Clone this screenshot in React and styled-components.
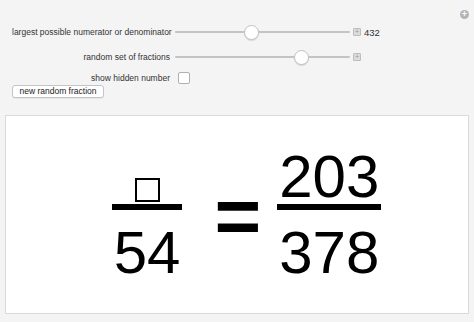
import React from "react";
import styled, { createGlobalStyle } from "styled-components";

const GlobalStyle = createGlobalStyle`
  html, body {
    margin: 0;
    padding: 0;
    background: #f4f4f4;
  }
  body {
    font-family: "Liberation Sans", Arial, sans-serif;
  }
`;

const Page = styled.div`
  width: 474px;
  height: 322px;
  box-sizing: border-box;
  position: relative;
  background: #f4f4f4;
  padding: 24px 5px 0 5px;
`;

const CornerButton = styled.div`
  position: absolute;
  top: 10px;
  right: 5px;
  width: 9px;
  height: 9px;
  border-radius: 50%;
  background: #b4b4b4;
  display: flex;
  align-items: center;
  justify-content: center;
  color: #fff;
  font-size: 9px;
  font-weight: bold;
  line-height: 9px;
`;

const Controls = styled.div`
  display: flex;
  flex-direction: column;
  padding-left: 7px;
`;

const Row = styled.div`
  display: grid;
  grid-template-columns: 158px auto auto auto;
  justify-content: start;
  align-items: center;
  column-gap: 5px;
  height: ${(p) => p.$h}px;
  margin-top: ${(p) => p.$mt || 0}px;
`;

const Label = styled.span`
  font-size: 8.5px;
  color: #333;
  text-align: right;
  white-space: nowrap;
`;

const Track = styled.div`
  position: relative;
  width: 175px;
  height: 2px;
  background: #c4c4c4;
  border-radius: 1px;
`;

const Thumb = styled.div`
  position: absolute;
  top: 50%;
  width: 15px;
  height: 15px;
  margin-left: -7.5px;
  margin-top: -7.5px;
  border-radius: 50%;
  background: #fff;
  border: 1px solid #c2c2c2;
  box-shadow: 0 1px 1px rgba(0, 0, 0, 0.12);
  box-sizing: border-box;
`;

const PlusBox = styled.div`
  width: 8px;
  height: 8px;
  margin-left: -2px;
  border: 1px solid #bdbdbd;
  border-radius: 1px;
  background: #dcdcdc;
  box-sizing: border-box;
  display: flex;
  align-items: center;
  justify-content: center;
  color: #999;
  font-size: 7px;
  line-height: 6px;
`;

const Value = styled.span`
  font-size: 9.5px;
  font-weight: normal;
  color: #333;
  margin-left: -2px;
`;

const Checkbox = styled.div`
  width: 12px;
  height: 12px;
  box-sizing: border-box;
  border: 1px solid #b0b0b0;
  border-radius: 2px;
  background: #fff;
  margin-left: 3px;
`;

const Button = styled.button`
  align-self: flex-start;
  margin-top: 0;
  height: 13px;
  width: 92px;
  padding: 0;
  border: 1px solid #c4c4c4;
  border-radius: 3px;
  background: #fff;
  font-family: "Liberation Sans", Arial, sans-serif;
  font-size: 8.5px;
  color: #222;
  line-height: 11px;
  box-shadow: 0 1px 0 rgba(0, 0, 0, 0.05);
`;

const Panel = styled.div`
  margin-top: 17px;
  height: 199px;
  box-sizing: border-box;
  background: #fff;
  border: 1px solid #dadada;
  display: flex;
  align-items: center;
  justify-content: center;
  padding-left: 19px;
  padding-top: 3px;
`;

const Fraction = styled.div`
  display: inline-flex;
  flex-direction: column;
  align-items: center;
  font-family: "Liberation Sans", Arial, sans-serif;
  font-size: 60px;
  color: #000;
`;

const Numerator = styled.div`
  height: 55px;
  line-height: 55px;
  display: flex;
  align-items: flex-end;
  justify-content: center;
  padding: 0 2px;
`;

const Bar = styled.div`
  align-self: stretch;
  height: 6px;
  background: #000;
`;

const Denominator = styled.div`
  margin-top: 13px;
  line-height: 60px;
  padding: 0 2px;
`;

const Hidden = styled.div`
  width: 25px;
  height: 24px;
  box-sizing: border-box;
  border: 2px solid #000;
  margin: 0 0 2px 0;
`;

const Equals = styled.div`
  font-family: "Liberation Sans", Arial, sans-serif;
  font-weight: bold;
  font-size: 80px;
  line-height: 80px;
  margin: 0 16px 0 32px;
  color: #000;
`;

export default function App() {
  return (
    <>
      <GlobalStyle />
      <Page>
        <CornerButton>+</CornerButton>
        <Controls>
          <Row $h={16}>
            <Label>largest possible numerator or denominator</Label>
            <Track>
              <Thumb style={{ left: "43.5%" }} />
            </Track>
            <PlusBox>+</PlusBox>
            <Value>432</Value>
          </Row>
          <Row $h={16} $mt={9}>
            <Label>random set of fractions</Label>
            <Track>
              <Thumb style={{ left: "72%" }} />
            </Track>
            <PlusBox>+</PlusBox>
          </Row>
          <Row $h={14} $mt={6}>
            <Label>show hidden number</Label>
            <Checkbox />
          </Row>
          <Button>new random fraction</Button>
        </Controls>
        <Panel>
          <Fraction>
            <Numerator>
              <Hidden />
            </Numerator>
            <Bar />
            <Denominator>54</Denominator>
          </Fraction>
          <Equals>=</Equals>
          <Fraction>
            <Numerator>203</Numerator>
            <Bar />
            <Denominator>378</Denominator>
          </Fraction>
        </Panel>
      </Page>
    </>
  );
}
